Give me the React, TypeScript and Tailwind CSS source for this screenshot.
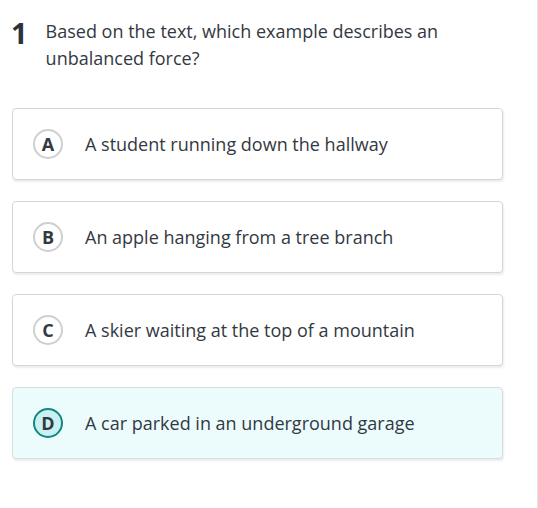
const options = [
  { letter: "A", text: "A student running down the hallway" },
  { letter: "B", text: "An apple hanging from a tree branch" },
  { letter: "C", text: "A skier waiting at the top of a mountain" },
  { letter: "D", text: "A car parked in an underground garage" },
];

export default function App() {
  const selected = "D";

  return (
    <div
      className="h-[508px] w-[538px] border-r border-[#e3e3e3] bg-white text-[#333942]"
      style={{ fontFamily: '"Open Sans", "Noto Sans", sans-serif' }}
    >
      <div className="flex gap-[18px] pl-[11px] pr-[40px] pt-[18px]">
        <span className="text-[29px] font-bold leading-[29px] text-[#2c323a]">1</span>
        <p className="text-[18px] leading-[27px]">
          Based on the text, which example describes an unbalanced force?
        </p>
      </div>

      <div className="ml-[12px] mt-[36px] flex w-[491px] flex-col gap-[21px]">
        {options.map((option) => {
          const active = option.letter === selected;

          return (
            <button
              key={option.letter}
              className={`flex h-[72px] items-center rounded-[4px] border text-left shadow-[1px_2px_2px_rgba(0,0,0,0.08)] ${
                active ? "border-[#d6dede] bg-[#ecfcfd]" : "border-[#d6d6d6] bg-white"
              }`}
              type="button"
            >
              <span
                className={`ml-[20px] flex h-[30px] w-[30px] shrink-0 items-center justify-center rounded-full border-2 text-[18px] font-bold ${
                  active ? "border-[#12867f] bg-[#c9f1f1]" : "border-[#cfcfcf] bg-white"
                }`}
              >
                {option.letter}
              </span>
              <span className="ml-[22px] text-[18px]">{option.text}</span>
            </button>
          );
        })}
      </div>
    </div>
  );
}
